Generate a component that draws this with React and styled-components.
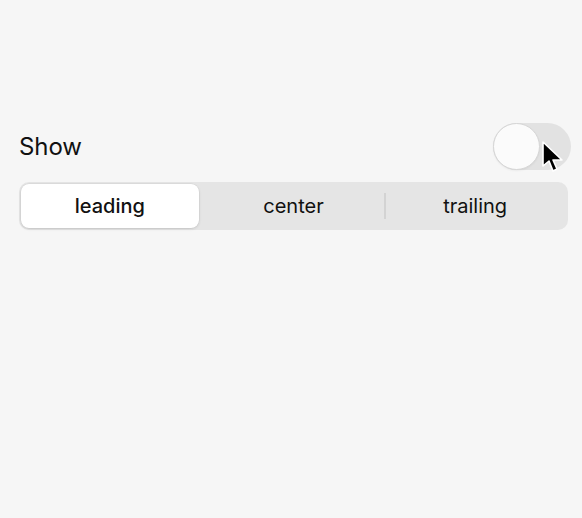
import React, { useState } from "react";
import styled, { createGlobalStyle } from "styled-components";

const Global = createGlobalStyle`
  html, body { margin: 0; padding: 0; background: #f6f6f6; }
  body { font-family: Inter, "Noto Sans", sans-serif; color: #111; }
`;

const Page = styled.div`
  width: 582px;
  height: 518px;
  box-sizing: border-box;
  padding: 123px 11px 0 19px;
  display: flex;
  flex-direction: column;
  gap: 12px;
  position: relative;
`;

const Row = styled.div`
  display: flex;
  align-items: center;
  justify-content: space-between;
  height: 47px;
`;

const Label = styled.span`
  font-size: 24px;
  font-weight: 400;
  letter-spacing: -0.1px;
  color: #111;
`;

const Track = styled.div`
  width: 78px;
  height: 47px;
  border-radius: 24px;
  background: #e2e2e2;
  box-sizing: border-box;
  display: flex;
  align-items: center;
`;

const Knob = styled.div`
  width: 47px;
  height: 47px;
  border-radius: 50%;
  background: #fbfbfb;
  box-sizing: border-box;
  border: 1.5px solid #d6d6d6;
  box-shadow: 0 1px 2px rgba(0,0,0,0.05);
`;

const Segmented = styled.div`
  display: grid;
  grid-template-columns: repeat(3, 1fr);
  margin-right: 3px;
  height: 48px;
  padding: 2px;
  box-sizing: border-box;
  border-radius: 10px;
  background: #e5e5e5;
`;

const Segment = styled.div`
  position: relative;
  display: flex;
  align-items: center;
  justify-content: center;
  font-size: 20px;
  font-weight: ${(p) => (p.$active ? 500 : 400)};
  color: #111;
  border-radius: 8px;
  margin-right: ${(p) => (p.$active ? "4px" : "0")};
  background: ${(p) => (p.$active ? "#ffffff" : "transparent")};
  box-shadow: ${(p) =>
    p.$active ? "0 1px 3px rgba(0,0,0,0.12), 0 0 0 0.5px rgba(0,0,0,0.06)" : "none"};
  &::before {
    content: "";
    display: ${(p) => (p.$divider ? "block" : "none")};
    position: absolute;
    left: 0;
    top: 9px;
    bottom: 9px;
    width: 1.5px;
    background: #d3d3d3;
  }
`;

const Cursor = styled.svg`
  position: absolute;
  left: 541px;
  top: 140px;
`;

export default function App() {
  const [sel] = useState(0);
  const items = ["leading", "center", "trailing"];
  return (
    <>
      <Global />
      <Page>
        <Row>
          <Label>Show</Label>
          <Track>
            <Knob />
          </Track>
        </Row>
        <Segmented>
          {items.map((t, i) => (
            <Segment key={t} $active={i === sel} $divider={i > 0 && i !== sel && i - 1 !== sel}>
              {t}
            </Segment>
          ))}
        </Segmented>
        <Cursor width="24" height="36" viewBox="0 0 24 36">
          <path
            d="M2 2 L2 26 L8 21 L12 31 L16 29 L12 20 L21 20 Z"
            fill="#000"
            stroke="#fff"
            strokeWidth="1.6"
            strokeLinejoin="round"
          />
        </Cursor>
      </Page>
    </>
  );
}
